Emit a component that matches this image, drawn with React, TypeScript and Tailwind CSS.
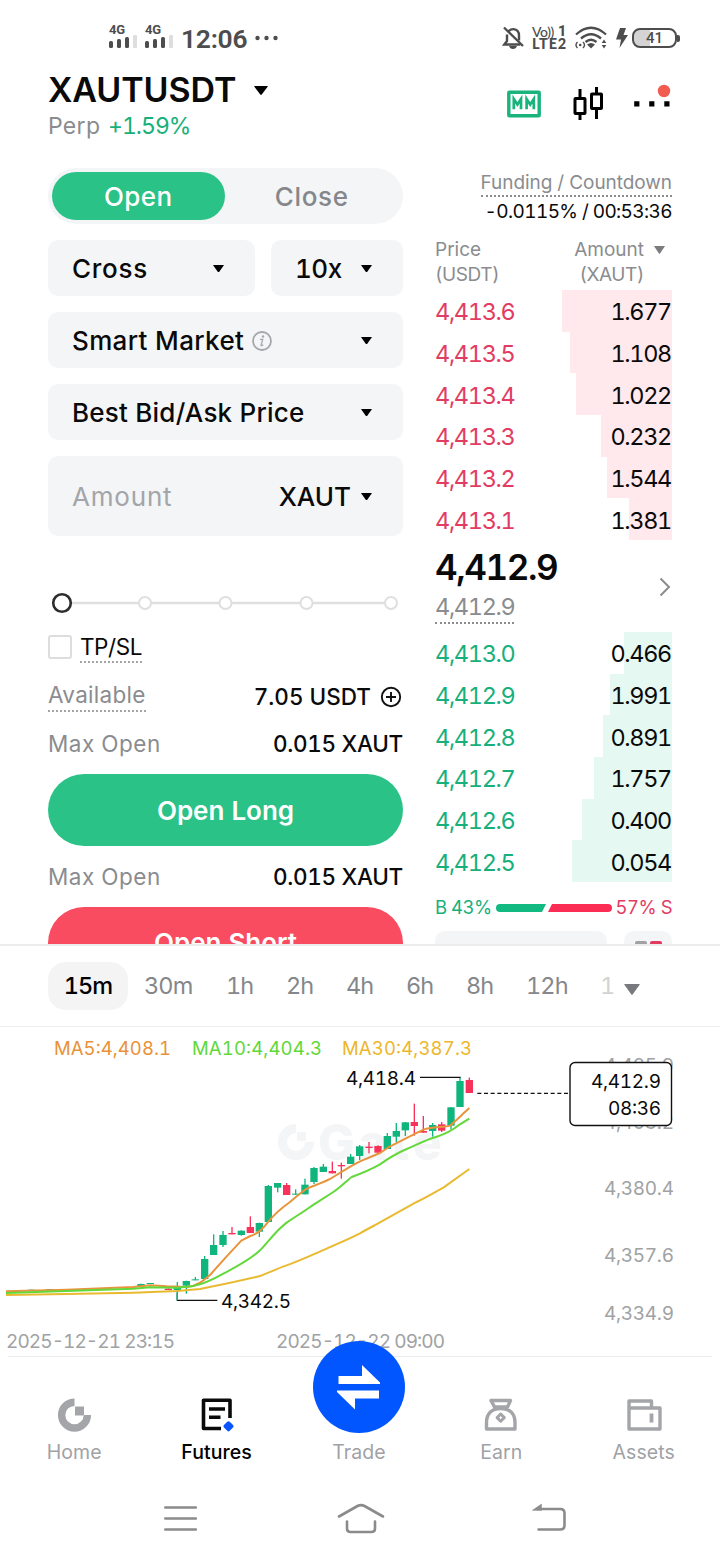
import type { ReactNode } from "react";

type Level = { price: string; amount: string; depth: number };

const asks: Level[] = [
  { price: "4,413.6", amount: "1.677", depth: 110 },
  { price: "4,413.5", amount: "1.108", depth: 102 },
  { price: "4,413.4", amount: "1.022", depth: 96 },
  { price: "4,413.3", amount: "0.232", depth: 71 },
  { price: "4,413.2", amount: "1.544", depth: 65 },
  { price: "4,413.1", amount: "1.381", depth: 43 },
];

const bids: Level[] = [
  { price: "4,413.0", amount: "0.466", depth: 48 },
  { price: "4,412.9", amount: "1.991", depth: 62 },
  { price: "4,412.8", amount: "0.891", depth: 69 },
  { price: "4,412.7", amount: "1.757", depth: 78 },
  { price: "4,412.6", amount: "0.400", depth: 90 },
  { price: "4,412.5", amount: "0.054", depth: 100 },
];

// x, wick top, body top, body bottom, wick bottom, rising
type Candle = [number, number, number, number, number, boolean];
const candles: Candle[] = [
  [95, 779, 779, 782, 782, true],
  [150, 777, 777, 780, 780, true],
  [286, 774, 774, 777, 777, true],
  [341, 771, 771, 774, 774, true],
  [423, 761, 762, 769, 769, true],
  [451, 759, 759, 762, 762, true],
  [505, 775, 776, 780, 780, false],
  [532, 756, 769, 780, 811, true],
  [559, 752, 753, 767, 791, true],
  [586, 741, 748, 751, 751, true],
  [614, 678, 687, 747, 747, true],
  [641, 613, 645, 675, 675, true],
  [669, 603, 615, 645, 651, true],
  [696, 591, 609, 613, 613, false],
  [724, 601, 602, 615, 617, true],
  [751, 559, 591, 609, 609, false],
  [778, 578, 579, 605, 621, true],
  [805, 465, 468, 576, 576, true],
  [833, 459, 459, 473, 487, true],
  [860, 459, 465, 495, 495, false],
  [887, 478, 491, 494, 494, true],
  [915, 446, 464, 493, 493, true],
  [942, 411, 414, 456, 462, true],
  [970, 402, 410, 426, 426, true],
  [997, 395, 423, 430, 430, false],
  [1024, 398, 405, 409, 446, false],
  [1052, 372, 380, 402, 402, true],
  [1079, 345, 349, 378, 390, true],
  [1107, 336, 350, 354, 370, false],
  [1134, 346, 348, 368, 370, false],
  [1162, 309, 318, 357, 357, true],
  [1189, 279, 303, 320, 336, true],
  [1216, 276, 277, 301, 318, true],
  [1243, 221, 276, 288, 317, false],
  [1270, 258, 303, 308, 308, false],
  [1298, 279, 285, 303, 320, true],
  [1325, 276, 283, 302, 306, false],
  [1353, 231, 232, 287, 298, true],
  [1380, 143, 153, 231, 231, true],
  [1408, 143, 150, 189, 189, false],
];

const intervals = [
  { label: "30m", width: 49 },
  { label: "1h", width: 27 },
  { label: "2h", width: 27 },
  { label: "4h", width: 27 },
  { label: "6h", width: 27 },
  { label: "8h", width: 27 },
  { label: "12h", width: 41 },
];

function Caret({ className = "h-[7.5px] w-[11px] text-black" }: { className?: string }) {
  return (
    <svg viewBox="0 0 12 8" preserveAspectRatio="none" className={`shrink-0 ${className}`}>
      <path d="M0.7 0h10.6q.8 0 .4.6L6.6 7.5q-.6.8-1.2 0L.3.6Q-.1 0 .7 0z" fill="currentColor" />
    </svg>
  );
}

function Signal() {
  return (
    <div className="flex w-[29px] flex-col">
      <span className="h-[11px] pl-px font-[Roboto] text-[13px] leading-[11px] font-bold tracking-[-0.3px]">4G</span>
      <svg viewBox="0 0 29 13" className="h-[13px] w-[29px]">
        <rect x="1" y="6" width="4" height="7" rx="1.5" fill="#4d4d4d" />
        <rect x="9" y="4" width="4" height="9" rx="1.5" fill="#4d4d4d" />
        <rect x="17" y="2" width="4" height="11" rx="1.5" fill="#4d4d4d" />
        <rect x="25" y="0" width="4" height="13" rx="1" fill="#dedede" />
      </svg>
    </div>
  );
}

function StatusBar() {
  return (
    <div className="flex h-[70px] items-center pt-[6px] text-[#4d4d4d]">
      <div className="ml-[108px] flex gap-[7px] pb-[4px]">
        <Signal />
        <Signal />
      </div>
      <span className="ml-[8px] w-[67px] pt-px font-[Roboto] text-[26.5px] leading-[30px] font-semibold tracking-[-0.3px] whitespace-nowrap">
        12:06
      </span>
      <svg viewBox="0 0 24 6" className="ml-[7px] h-[6px] w-[24px]" fill="#4d4d4d">
        <circle cx="2.500" cy="3" r="2.200" />
        <circle cx="11.500" cy="3" r="2.200" />
        <circle cx="20.500" cy="3" r="2.200" />
      </svg>
      <svg viewBox="0 0 22 24" className="mr-[8px] ml-auto h-[24px] w-[22px]" fill="none" stroke="#4d4d4d" strokeWidth="2.400">
        <path d="M5 8.500v6.500L2.300 18.500h16M6 6C7.500 4 9 3 11.500 3.100c4 .4 5.500 3 5.500 6.400v5" />
        <path d="M2 1.500l19 18.500" />
        <path d="M7 20h8q-1 3-4 3t-4-3z" fill="#4d4d4d" stroke="none" />
      </svg>
      <div className="mr-[8px] flex w-[35px] flex-col font-[Lato] whitespace-nowrap">
        <div className="flex h-[12px] items-center leading-[12px] font-medium">
          <span className="w-[26px] text-[14px] leading-[12px] tracking-[-0.4px]">Vo))</span>
          <span className="font-[Roboto] text-[14.5px] leading-[12px] font-extrabold">1</span>
        </div>
        <span className="h-[12px] text-[14.5px] leading-[12px] font-black tracking-[0.8px]">LTE2</span>
      </div>
      <svg viewBox="0 0 32 24" className="mr-[9px] h-[24px] w-[32px]" fill="none" stroke="#4d4d4d" strokeWidth="2.300">
        <path d="M1 8.500Q16-5 31 8.500M6 12.500q10-8.500 20 0M10.500 16q5.500-4.500 11 0" />
        <path d="M16 22.500l-4-4q4-3 8 0z" fill="#4d4d4d" stroke="none" />
        <path d="M2.500 16q-3 3 0 6M8 16q3 3 0 6" strokeWidth="1.400" />
        <circle cx="5.200" cy="19" r="1.300" fill="#4d4d4d" stroke="none" />
        <path d="M29 13.500l2.300 3.500h-4.600zM29 22.500l2.300-3.500h-4.600z" fill="#4d4d4d" stroke="none" />
      </svg>
      <svg viewBox="0 0 12 20" className="mr-[4px] h-[20px] w-[12px]" fill="#4d4d4d">
        <path d="M4 0h6L7.500 7H12L3.500 20 5 11.500H0z" />
      </svg>
      <div className="flex h-[20px] w-[45px] items-center justify-center rounded-[8px] border-2 border-[#4d4d4d] bg-linear-to-r from-[#d4d4d4] from-38% to-white to-38% font-[Roboto] text-[15px] leading-[16px] font-medium">
        41
      </div>
      <div className="mr-[40px] h-[7px] w-[3px] rounded-r-[2px] bg-[#4d4d4d]" />
    </div>
  );
}

function Header() {
  return (
    <div className="flex h-[98px] justify-between pr-[48px] pl-[48px]">
      <div>
        <div className="flex h-[40px] items-center">
          <h1 className="w-[206px] text-[34px] leading-[40px] font-semibold tracking-[-0.1px]">XAUTUSDT</h1>
          <Caret className="h-[9px] w-[14px] text-black" />
        </div>
        <div className="flex h-[32px] text-[23px] leading-[32px]">
          <span className="w-[60px] tracking-[0.3px] text-[#8a8c8f]">Perp</span>
          <span className="tracking-[-1px] text-[#16b17b]">+1.59%</span>
        </div>
      </div>
      <div className="flex pt-[14px]">
        <svg viewBox="0 0 34 28" className="mt-[6px] mr-[32px] h-[28px] w-[34px]" fill="none" stroke="#18b47c">
          <rect x="1.800" y="2.300" width="30.400" height="23.400" rx="0.500" strokeWidth="3.400" />
          <path d="M6.800 19.300V9l3.600 5.500L14 9v10.300M19.600 19.300V9l3.600 5.500L26.800 9v10.300" strokeWidth="2.700" />
        </svg>
        <svg viewBox="0 0 32 34" className="mt-[3px] mr-[29px] h-[34px] w-[32px]" fill="none" stroke="#000" strokeWidth="3">
          <path d="M7 2v9M7 27v6M23.500 0v7M23.500 22v10" />
          <rect x="2" y="11.500" width="10" height="15" rx="0.500" />
          <rect x="18.500" y="7" width="10" height="14.500" rx="0.500" />
        </svg>
        <svg viewBox="0 0 38 34" className="h-[34px] w-[38px]">
          <path d="M0.200 17.200h5.200v5.200H.2zM15.200 17.200h5.200v5.200h-5.200zM30.300 17.200h5.200v5.200h-5.200z" fill="#000" />
          <circle cx="30" cy="7" r="6.200" fill="#f25b50" />
        </svg>
      </div>
    </div>
  );
}

function Field({ children, className }: { children: ReactNode; className: string }) {
  return (
    <div
      className={`flex shrink-0 items-center rounded-[10px] bg-[#f4f5f7] pt-px text-[26px] leading-[32px] font-medium whitespace-nowrap ${className}`}
    >
      {children}
    </div>
  );
}

function MaxOpen() {
  return (
    <div className="flex h-[32px] items-center justify-between text-[22.5px] leading-[32px] whitespace-nowrap">
      <span className="tracking-[0.5px] text-[#8a8c8f]">Max Open</span>
      <span className="font-medium tracking-[-0.3px]">0.015 XAUT</span>
    </div>
  );
}

function OrderForm() {
  return (
    <div className="flex w-[355px] shrink-0 flex-col *:shrink-0">
      <div className="flex h-[56px] rounded-full bg-[#f4f5f7] p-[4px] text-[26px] leading-[50px] font-medium">
        <div className="w-[173px] rounded-full bg-[#2bc287] text-center tracking-[0.4px] text-white">Open</div>
        <div className="w-[175px] text-center tracking-[0.7px] text-[#85878b]">Close</div>
      </div>
      <div className="mt-[16px] flex gap-[16px]">
        <Field className="h-[56px] w-[207px] justify-between pr-[31px] pl-[24px]">
          <span className="tracking-[0.7px]">Cross</span>
          <Caret />
        </Field>
        <Field className="h-[56px] w-[132px] justify-between pr-[31px] pl-[24px]">
          <span className="tracking-[-0.5px]">10x</span>
          <Caret />
        </Field>
      </div>
      <Field className="mt-[16px] h-[56px] pr-[31px] pl-[24px]">
        <span className="tracking-[0.35px]">Smart Market</span>
        <svg viewBox="0 0 20 20" className="ml-[8px] size-[20px]" fill="none" stroke="#a5a7aa">
          <circle cx="10" cy="10" r="9" strokeWidth="1.800" />
          <path d="M8 8.300h2.700L9 14.500q.6.600 2.300-.800" strokeWidth="1.300" />
          <circle cx="11" cy="5.500" r="1.200" fill="#a5a7aa" stroke="none" />
        </svg>
        <Caret className="ml-auto h-[7.5px] w-[11px] text-black" />
      </Field>
      <Field className="mt-[16px] h-[56px] justify-between pr-[31px] pl-[24px]">
        <span className="tracking-[0.22px]">Best Bid/Ask Price</span>
        <Caret />
      </Field>
      <Field className="mt-[16px] h-[80px] pr-[31px] pl-[24px]">
        <span className="font-normal tracking-[0.8px] text-[#a3a5a8]">Amount</span>
        <span className="mr-[10px] ml-auto">XAUT</span>
        <Caret />
      </Field>
      <svg viewBox="0 0 355 24" className="mt-[55px] h-[24px] w-[355px]" fill="#fff">
        <path d="M14 12h329" stroke="#dedfe1" strokeWidth="2.600" />
        <circle cx="14" cy="12" r="8.800" stroke="#2d2d2f" strokeWidth="2.600" />
        {[97, 177.5, 258.5, 343].map((x) => (
          <circle key={x} cx={x} cy="12" r="6" stroke="#dedfe1" strokeWidth="2" />
        ))}
      </svg>
      <div className="mt-[16px] flex h-[32px] items-center">
        <div className="size-[24px] rounded-[3px] border-2 border-[#dcdddf]" />
        <span className="ml-[8px] h-[32px] border-b-2 border-dotted border-[#a3a5a8] text-[22.5px] leading-[31px] tracking-[-0.4px]">
          TP/SL
        </span>
      </div>
      <div className="mt-[17px] flex h-[32px] items-center justify-between text-[22.5px] whitespace-nowrap">
        <span className="h-[32px] border-b-2 border-dotted border-[#a3a5a8] leading-[30px] tracking-[0.3px] text-[#8a8c8f]">
          Available
        </span>
        <span className="flex items-center pt-[2px] pr-[1px] leading-[32px] font-medium">
          7.05 USDT
          <svg viewBox="0 0 22 22" className="ml-[9px] size-[22px]" fill="none" stroke="#111" strokeWidth="1.900">
            <circle cx="11" cy="11" r="9.200" />
            <path d="M6 11h10M11 6v10" />
          </svg>
        </span>
      </div>
      <div className="mt-[16px]">
        <MaxOpen />
      </div>
      <button className="mt-[14px] h-[72px] rounded-full bg-[#2bc287] pt-px text-[26px] leading-[72px] font-semibold text-white">
        Open Long
      </button>
      <div className="mt-[15px]">
        <MaxOpen />
      </div>
      <button className="mt-[14px] h-[72px] rounded-full bg-[#f94c60] text-[26px] leading-[72px] font-semibold text-white">
        Open Short
      </button>
    </div>
  );
}

function DepthRows({ levels, side }: { levels: Level[]; side: "ask" | "bid" }) {
  return (
    <div className="grid h-[250px] grid-rows-6">
      {levels.map((l) => (
        <div
          key={l.price}
          className="relative flex items-center justify-between pt-[3px] text-[23.5px] leading-[32px] tracking-[-1.35px] whitespace-nowrap"
        >
          <div
            className={side === "ask" ? "absolute inset-y-0 right-0 bg-[#ffe9ed]" : "absolute inset-y-0 right-0 bg-[#e5f9f2]"}
            style={{ width: l.depth }}
          />
          <span className={side === "ask" ? "relative text-[#e23c63]" : "relative text-[#17b07c]"}>{l.price}</span>
          <span className="relative mr-px">{l.amount}</span>
        </div>
      ))}
    </div>
  );
}

function OrderBook() {
  return (
    <div className="flex w-[237px] flex-col *:shrink-0">
      <div className="flex flex-col items-end text-[19px] whitespace-nowrap">
        <span className="h-[29px] border-b-2 border-dotted border-[#8a8c8f] leading-[29px] tracking-[-0.05px] text-[#8a8c8f]">
          Funding / Countdown
        </span>
        <span className="mt-[2px] h-[26px] leading-[26px] tracking-[-0.6px]">-0.0115% / 00:53:36</span>
      </div>
      <div className="mt-[12px] flex h-[53px] justify-between text-[19px] leading-[25px] text-[#8a8c8f]">
        <div>
          Price
          <br />
          <span className="tracking-[-0.4px]">(USDT)</span>
        </div>
        <div className="flex">
          <div className="text-right">
            Amount
            <br />
            <span className="tracking-[-0.4px]">(XAUT)</span>
          </div>
          <Caret className="mt-[9px] mr-[7px] ml-[10px] h-[8px] w-[11px] text-[#7a7c7f]" />
        </div>
      </div>
      <DepthRows levels={asks} side="ask" />
      <div className="flex h-[92px] items-center justify-between">
        <div className="flex flex-col items-start">
          <span className="h-[40px] text-[35px] leading-[38px] font-semibold tracking-[-1.4px]">4,412.9</span>
          <span className="h-[36px] border-b-2 border-dotted border-[#8a8c8f] text-[23.5px] leading-[38px] tracking-[-1.35px] text-[#8a8c8f]">
            4,412.9
          </span>
        </div>
        <svg viewBox="0 0 12 20" className="mt-[2px] mr-px h-[20px] w-[12px]" fill="none" stroke="#8a8c8f" strokeWidth="2">
          <path d="M1.500 1.500L10 10l-8.500 8.500" />
        </svg>
      </div>
      <DepthRows levels={bids} side="bid" />
      <div className="mt-[12px] flex h-[28px] items-center justify-between text-[18.5px] tracking-[-0.5px] whitespace-nowrap">
        <span className="w-[61px] text-[#17b07c]">B 43%</span>
        <svg viewBox="0 0 116 8" className="h-[8px] w-[116px]">
          <path d="M4 0h46l-4 8H4Q0 8 0 4t4-4z" fill="#12b980" />
          <path d="M56 0h56q4 0 4 4t-4 4H52z" fill="#fb2d55" />
        </svg>
        <span className="w-[60px] text-right text-[#e23c63]">57% S</span>
      </div>
      <div className="mt-[9px] flex justify-between">
        <div className="h-[48px] w-[172px] rounded-[10px] bg-[#f4f5f7]" />
        <div className="flex h-[48px] w-[48px] justify-center gap-[3px] rounded-[10px] bg-[#f4f5f7] pt-[10px]">
          <div className="h-[5px] w-[12px] rounded-[2px] bg-[#a0a2a5]" />
          <div className="h-[5px] w-[12px] rounded-[2px] bg-[#e23c63]" />
        </div>
      </div>
    </div>
  );
}

function IntervalBar() {
  return (
    <div className="flex h-[83px] items-center border-t-2 border-b border-[#ededee] pl-[48px] text-[23.5px] leading-[32px] tracking-[-0.9px] text-[#85878b]">
      <div className="mr-[17px] flex h-[48px] w-[80px] items-center justify-center rounded-[18px] bg-[#f4f4f5] font-medium tracking-[-1px] text-black">
        15m
      </div>
      <div className="-ml-px flex gap-[33px] whitespace-nowrap">
        {intervals.map((i) => (
          <span key={i.label} style={{ width: i.width }}>
            {i.label}
          </span>
        ))}
      </div>
      <span className="ml-[33px] w-[13px] text-[#d2d3d5]">1</span>
      <Caret className="mt-[6px] ml-[11px] h-[11px] w-[16px] text-[#77797c]" />
    </div>
  );
}

function Chart() {
  return (
    <svg viewBox="0 -3 720 329" className="block h-[329px] w-[720px]" fontSize="19">
      <g fill="#f4f5f6">
        <path d="M296 94a18 18 0 1 0 18 18h-9a9 9 0 1 1-9-9zM297 102h9v9h-9z" />
        <text x="318" y="130" fontSize="49" fontWeight="800" textLength="124">Gate</text>
      </g>
      <g fontSize="18.500">
        <text x="54" y="25" fill="#e8923a" textLength="117">MA5:4,408.1</text>
        <text x="192" y="25" fill="#5fd83a" textLength="130">MA10:4,404.3</text>
        <text x="342" y="25" fill="#edb62c" textLength="130">MA30:4,387.3</text>
      </g>
      <g fill="#a0a2a4">
        <text x="604" y="42" textLength="70">4,425.9</text>
        <text x="604" y="99" textLength="70">4,403.2</text>
        <text x="604" y="165" textLength="70">4,380.4</text>
        <text x="604" y="232" textLength="70">4,357.6</text>
        <text x="604" y="290" textLength="70">4,334.9</text>
        <text x="6" y="318" textLength="169">2025-12-21 23:15</text>
        <text x="276" y="318" textLength="169">2025-12-22 09:00</text>
      </g>
      <g transform="scale(0.33333)">
        {candles.map(([x, wt, bt, bb, wb, up]) => (
          <g key={x} fill={up ? "#0fb57c" : "#f7335b"}>
            <rect x={x - 2} y={wt} width="4" height={wb - wt} />
            <rect x={x - 11} y={bt} width="22" height={bb - bt} />
          </g>
        ))}
        <g fill="none" strokeWidth="6" strokeLinejoin="round">
          <path
            d="M18 784L200 779 400 771 450 766 500 769 560 771C590 769 610 752 630 735L680 679 724 632 751 618C775 612 790 595 805 575C830 545 850 530 870 516C890 500 905 485 925 474C950 464 970 458 990 447L1052 409 1080 394 1140 369C1165 350 1180 343 1200 334L1270 299C1300 289 1330 293 1350 287C1370 270 1390 250 1408 234"
            stroke="#e8943c"
          />
          <path
            d="M18 795L200 792 400 788 532 783 600 777C660 765 720 752 780 738C810 727 830 716 860 706C900 692 940 673 980 656C1010 642 1045 628 1080 610C1110 593 1130 583 1160 566L1250 516C1280 502 1300 489 1330 473L1408 417"
            stroke="#e9ba2f"
          />
          <path
            d="M18 789L200 783 400 776 450 772 532 773 580 768C610 763 640 748 670 731C710 710 750 690 780 661C810 630 825 605 860 578C900 550 920 540 942 523L1000 486C1020 474 1040 452 1055 441C1090 428 1110 420 1140 403C1165 385 1190 370 1220 357C1250 344 1280 328 1310 320C1345 310 1365 295 1380 283L1408 266"
            stroke="#63d83b"
          />
        </g>
        <path d="M532 790V811H652" fill="none" stroke="#111" strokeWidth="3.500" />
        <path d="M532 785V811" stroke="#0fb57c" strokeWidth="4" />
        <path d="M1260 142H1382" stroke="#111" strokeWidth="3.500" />
        <path d="M1432 190H1708" stroke="#111" strokeWidth="3.500" strokeDasharray="12 8" />
      </g>
      <g fill="#0a0a0a">
        <text x="346" y="55" textLength="70">4,418.4</text>
        <text x="221" y="278" textLength="70">4,342.5</text>
        <rect x="570" y="32.500" width="101.500" height="63" rx="5" fill="#fff" stroke="#111" strokeWidth="1.400" />
        <text x="591" y="58" textLength="70">4,412.9</text>
        <text x="608" y="85" textLength="53">08:36</text>
      </g>
    </svg>
  );
}

function NavItem({ label, icon, active }: { label: string; icon: ReactNode; active?: boolean }) {
  return (
    <div
      className={`flex w-[142.4px] flex-col items-center text-[19.5px] leading-[24px] tracking-[0.1px] ${active ? "font-medium text-black" : "text-[#a0a2a5]"}`}
    >
      <div className="flex h-[45px] items-end">{icon}</div>
      <span className="mt-[2px]">{label}</span>
    </div>
  );
}

function BottomNav() {
  return (
    <div className="ml-[3px] flex h-[119px] pt-[36px]">
      <NavItem
        label="Home"
        icon={
          <svg viewBox="0 0 36 36" className="mb-[5px] h-[36px] w-[36px]" fill="#a3a5a8">
            <path d="M18.500 1.500a16.600 16.600 0 1 0 16.600 16.600h-7.400a9.200 9.200 0 1 1-9.200-9.200zM19 9.500h9v9h-9z" />
          </svg>
        }
      />
      <NavItem
        label="Futures"
        active
        icon={
          <svg viewBox="0 0 36 36" className="mb-[5px] h-[36px] w-[36px]" fill="none" stroke="#0a0a0a" strokeWidth="3.600">
            <path d="M31 21V3.300H4.500V31.500H22" strokeLinejoin="round" />
            <path d="M10 12h16M10 20.300h11.500" />
            <path d="M29.500 26l3.300 3.300-3.300 3.300-3.300-3.300z" fill="#0a55ff" stroke="#0a55ff" strokeWidth="3.500" strokeLinejoin="round" />
          </svg>
        }
      />
      <NavItem
        label="Trade"
        icon={
          <div className="relative h-[36px] w-[36px]">
            <div className="absolute -top-[61px] -left-[28px] flex size-[92px] items-center justify-center rounded-full bg-[#0256ff]">
              <svg viewBox="0 0 44 46" className="h-[46px] w-[44px]" fill="#fff">
                <path d="M1.500 12H25V1L43 18.500V20H1.500zM42 26.500V34.500H18V45.500L0 28V26.500z" />
              </svg>
            </div>
          </div>
        }
      />
      <NavItem
        label="Earn"
        icon={
          <svg viewBox="0 0 36 36" className="mb-[5px] h-[36px] w-[36px]" fill="none" stroke="#a3a5a8" strokeWidth="3.400" strokeLinejoin="round">
            <path d="M8 3.500h19.500L24.500 10h-13z" />
            <path d="M3.500 32V25.500C3.500 17 8.500 11.500 17.700 11.500S32 17 32 25.500V32z" />
            <path d="M17.700 17l3.600 3.600-3.600 3.600-3.600-3.600z" strokeWidth="3" />
          </svg>
        }
      />
      <NavItem
        label="Assets"
        icon={
          <svg viewBox="0 0 36 36" className="mb-[5px] h-[36px] w-[36px]" fill="none" stroke="#a3a5a8" strokeWidth="3.400" strokeLinejoin="round">
            <path d="M3 11h31V32H3zM3 11v-7h22.500v7" />
            <path d="M25.500 16.500v9" strokeWidth="3.800" />
          </svg>
        }
      />
    </div>
  );
}

function SystemNav() {
  return (
    <div className="flex h-[84px] items-center pl-[163px]">
      <svg viewBox="0 0 35 28" className="h-[28px] w-[35px] shrink-0" stroke="#8b8b8b" strokeWidth="2.600" strokeLinecap="round">
        <path d="M2.300 3.500h30.500M2.300 14.500h30.500M2.300 25.500h30.500" />
      </svg>
      <svg viewBox="0 0 48 32" className="ml-[138.5px] h-[32px] w-[48px] shrink-0" fill="none" stroke="#8b8b8b" strokeWidth="2.600" strokeLinecap="round">
        <path d="M2 14.500L20.500 4q3.500-1.800 7 0L46 14.500" />
        <path d="M10 19.500v7q0 3.500 3.500 3.500h21q3.500 0 3.500-3.500v-7" />
      </svg>
      <svg viewBox="0 0 36 30" className="ml-[147px] h-[30px] w-[36px] shrink-0" fill="none" stroke="#8b8b8b" strokeWidth="2.600" strokeLinecap="round">
        <path d="M5 6h23q4.500 0 4.500 4v12.500q0 4-4.500 4H6.500" />
        <path d="M.5 7.200L9.500 1v6.200z" fill="#8b8b8b" strokeWidth="0.500" />
      </svg>
    </div>
  );
}

export default function App() {
  return (
    <div className="flex h-[1560px] w-[720px] flex-col overflow-hidden bg-white font-[Inter,sans-serif] text-[#0a0a0a] tabular-nums">
      <StatusBar />
      <Header />
      <div className="flex h-[776px] shrink-0 gap-[32px] overflow-hidden px-[48px]">
        <OrderForm />
        <OrderBook />
      </div>
      <IntervalBar />
      <Chart />
      <div className="mx-[8px] h-px bg-[#eaebec]" />
      <BottomNav />
      <SystemNav />
    </div>
  );
}
